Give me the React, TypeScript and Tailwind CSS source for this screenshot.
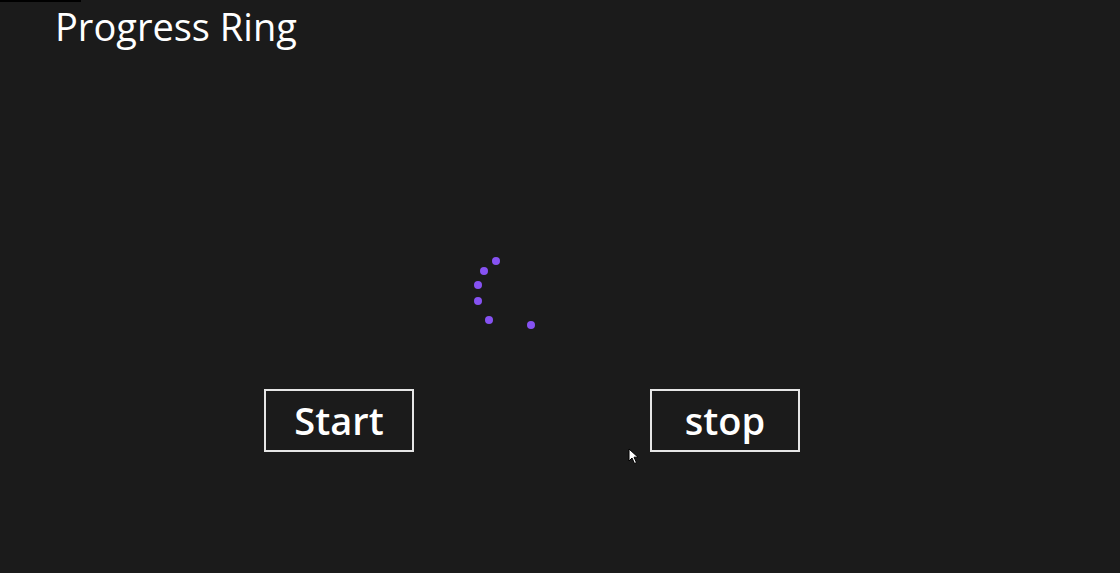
const DOTS = [
  [496, 261],
  [484, 271],
  [478, 285],
  [478, 301],
  [489, 320],
  [531, 325],
];

function Ring() {
  // drawn in a 80x80 box whose top-left sits at (465, 252)
  return (
    <svg width="80" height="80" viewBox="0 0 80 80" className="block">
      {DOTS.map(([x, y], i) => (
        <circle key={i} cx={x - 465} cy={y - 252} r="4" fill="#8652f2" />
      ))}
    </svg>
  );
}

function Cursor() {
  return (
    <svg
      width="12"
      height="17"
      viewBox="0 0 12 17"
      className="absolute left-[628px] top-[448px]"
    >
      <path
        d="M1 1 L1 13 L4 10 L6.5 15.5 L8.5 14.6 L6 9.2 L10 9.2 Z"
        fill="#ffffff"
        stroke="#000000"
        strokeWidth="1"
        strokeLinejoin="round"
      />
    </svg>
  );
}

function Button({ label }: { label: string }) {
  return (
    <button className="flex h-[63px] w-[150px] items-center justify-center border-2 border-[#e6e6e6] bg-transparent pb-[2px] font-['Open_Sans',sans-serif] text-[38px] font-semibold leading-none text-white">
      {label}
    </button>
  );
}

export default function App() {
  return (
    <div className="relative flex h-[573px] w-[1120px] flex-col overflow-hidden bg-[#1b1b1b] font-['Open_Sans',sans-serif]">
      <div className="h-[2px] w-[81px] bg-black" />
      <h1 className="pl-[55px] text-[38px] font-normal leading-[48px] text-white">
        Progress Ring
      </h1>

      <div className="ml-[465px] mt-[202px]">
        <Ring />
      </div>

      <div className="mt-[57px] flex gap-[236px] pl-[264px]">
        <Button label="Start" />
        <Button label="stop" />
      </div>

      <Cursor />
    </div>
  );
}
